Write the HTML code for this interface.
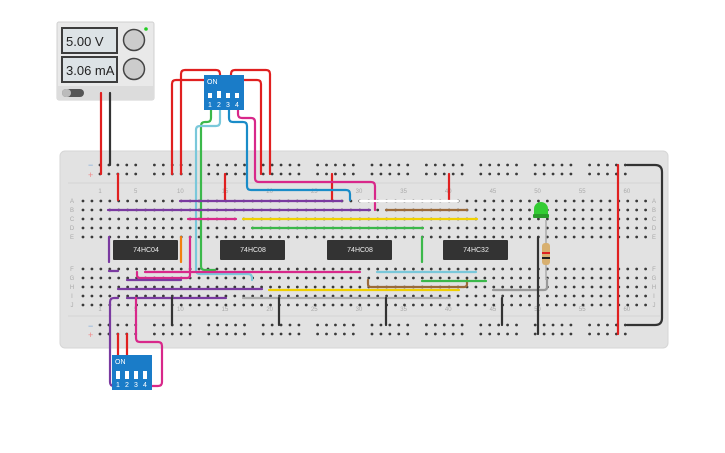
<!DOCTYPE html>
<html><head><meta charset="utf-8"><style>
html,body{margin:0;padding:0;background:#fff;width:725px;height:453px;overflow:hidden}
svg{display:block}
text{font-family:"Liberation Sans",sans-serif}
</style></head><body>
<svg id="s" width="725" height="453" viewBox="0 0 725 453" xmlns="http://www.w3.org/2000/svg">
<rect x="60" y="151" width="608" height="197" rx="5" fill="#e2e2e2" stroke="#d6d6d6"/>
<line x1="68" y1="183" x2="660" y2="183" stroke="#d4d4d4"/>
<line x1="68" y1="316" x2="660" y2="316" stroke="#d4d4d4"/>
<g id="holes" fill="#3a3a3a"></g>
<g font-size="6" fill="#aaa" id="labels"></g>
<text x="88" y="168" font-size="9" fill="#7aa7d8">−</text>
<text x="88" y="178" font-size="9" fill="#e88">+</text>
<text x="88" y="329" font-size="9" fill="#7aa7d8">−</text>
<text x="88" y="338" font-size="9" fill="#e88">+</text>

<rect x="57" y="22" width="97" height="78" rx="2" fill="#e9e9e9" stroke="#d0d0d0"/>
<rect x="57" y="86" width="97" height="14" fill="#dcdcdc"/>
<rect x="62" y="28" width="55" height="25" fill="#dde3e6" stroke="#3d3d3d" stroke-width="2"/>
<rect x="62" y="57" width="55" height="25" fill="#dde3e6" stroke="#3d3d3d" stroke-width="2"/>
<text x="66" y="46" font-size="13" fill="#222">5.00 V</text>
<text x="66" y="75" font-size="13" fill="#222">3.06 mA</text>
<circle cx="134" cy="40" r="10.5" fill="#ccc" stroke="#444" stroke-width="1.5"/>
<circle cx="134" cy="69" r="10.5" fill="#ccc" stroke="#444" stroke-width="1.5"/>
<circle cx="146" cy="29" r="1.8" fill="#2c2"/>
<rect x="62" y="89" width="22" height="8" rx="4" fill="#555"/>
<rect x="62" y="89" width="9" height="8" rx="4" fill="#bbb"/>

<g fill="none" stroke-width="2.2" stroke-linecap="round" stroke-linejoin="round">
<path d="M101 93V174" stroke="#e02020"/>
<path d="M110 93V165" stroke="#333"/>
<path d="M118 174V200" stroke="#e02020"/>
<path d="M225 174V200" stroke="#e02020"/>
<path d="M332 174V200" stroke="#e02020"/>
<path d="M449 174V200" stroke="#e02020"/>
<path d="M618 165V334" stroke="#e02020"/>
<path d="M172 174V84q0-4 4-4H204" stroke="#e02020"/>
<path d="M181 174V74q0-4 4-4H216q4 0 4 4v3" stroke="#e02020"/>
<path d="M261 174V84q0-4-4-4H244" stroke="#e02020"/>
<path d="M270 174V74q0-4-4-4H235q-4 0-4 4v3" stroke="#e02020"/>
<path d="M211 108V118q0 4-4 4h-2q-4 0-4 4V266q0 4 4 4H215" stroke="#3bb84a"/>
<path d="M220 108V122q0 4-4 4h-16q-4 0-4 4V270q0 4 4 4H248q4 0 4 4v2" stroke="#7ac8da"/>
<path d="M229 108V118q0 4 4 4h10q4 0 4 4V186q0 4 4 4H346q4 0 4 4v6" stroke="#1a8cc8"/>
<path d="M238 108V114q0 4 4 4h9q4 0 4 4V178q0 4 4 4H371q4 0 4 4v24" stroke="#d8288a"/>
<path d="M180 201H342" stroke="#7a3aa0"/>
<path d="M360 201H458" stroke="#fff"/>
<path d="M108 210H370" stroke="#7a3aa0"/>
<path d="M386 210H467" stroke="#9a6a3a"/>
<path d="M188 219H236" stroke="#d8288a"/>
<path d="M243 219H477" stroke="#f0d000"/>
<path d="M252 228H423" stroke="#3bb84a"/>
<path d="M109 237V262" stroke="#7a3aa0"/>
<path d="M181 237V262" stroke="#f08010"/>
<path d="M190 237V262" stroke="#d8288a"/>
<path d="M422 237V262" stroke="#3bb84a"/>
<path d="M109 271H118" stroke="#7a3aa0"/>
<path d="M145 272H360" stroke="#d8288a"/>
<path d="M190 262V275q0 3-3 3H140q-3 0-3-3v-3" stroke="#d8288a"/>
<path d="M377 272H476" stroke="#7ac8da"/>
<path d="M127 280H181" stroke="#7a3aa0"/>
<path d="M368 280v4q0 3 3 3H464q3 0 3-3v-4" stroke="#9a6a3a"/>
<path d="M422 281H486" stroke="#3bb84a"/>
<path d="M118 289H262" stroke="#7a3aa0"/>
<path d="M269 290H459" stroke="#f0d000"/>
<path d="M493 290H544q3 0 3-3v-8" stroke="#999"/>
<path d="M243 298H450" stroke="#aaa"/>
<path d="M127 298H226" stroke="#7a3aa0"/>
<path d="M118 298h-4q-4 0-4 4V382q0 4 4 4h2" stroke="#7a3aa0"/>
<path d="M136 298V338q0 4 4 4h18q4 0 4 4V382q0 4-4 4h-6" stroke="#d8288a"/>
<path d="M172 298V325" stroke="#333"/>
<path d="M279 298V325" stroke="#333"/>
<path d="M386 298V325" stroke="#333"/>
<path d="M502 298V325" stroke="#333"/>
<path d="M538 237V334" stroke="#333"/>
<path d="M627 165H655q7 0 7 7V318q0 7-7 7H627" stroke="#333"/>
<path d="M118 334V356" stroke="#e02020"/>
<path d="M127 334V356" stroke="#e02020"/>
</g>

<g font-size="7" fill="#eee" font-family="Liberation Mono,monospace" text-anchor="middle">
<rect x="113" y="240" width="65" height="20" rx="1" fill="#333"/><text x="146" y="252">74HC04</text>
<rect x="220" y="240" width="65" height="20" rx="1" fill="#333"/><text x="253" y="252">74HC08</text>
<rect x="327" y="240" width="65" height="20" rx="1" fill="#333"/><text x="360" y="252">74HC08</text>
<rect x="443" y="240" width="65" height="20" rx="1" fill="#333"/><text x="476" y="252">74HC32</text>
</g>

<path d="M534 216v-7a7 7 0 0 1 14 0v7z" fill="#3c3"/>
<rect x="533" y="214" width="16" height="4" rx="1" fill="#2a9a2a"/>
<path d="M546 220V280" stroke="#aaa" stroke-width="1.5"/>
<rect x="542" y="243" width="8" height="22" rx="3" fill="#d8b070"/>
<rect x="542" y="252" width="8" height="2" fill="#d22"/>
<rect x="542" y="257" width="8" height="2" fill="#222"/>

<g>
<rect x="204" y="75" width="40" height="35" fill="#1a7cc8"/>
<text x="207" y="84" font-size="7" fill="#fff">ON</text>
<g fill="#fff"><rect x="208" y="88" width="4" height="10"/><rect x="217" y="88" width="4" height="10"/><rect x="226" y="88" width="4" height="10"/><rect x="235" y="88" width="4" height="10"/></g>
<g fill="#1a7cc8"><rect x="208" y="88" width="4" height="5"/><rect x="217" y="88" width="4" height="3"/><rect x="226" y="88" width="4" height="5"/><rect x="235" y="88" width="4" height="5"/></g>
<g font-size="7" fill="#fff"><text x="208" y="107">1</text><text x="217" y="107">2</text><text x="226" y="107">3</text><text x="235" y="107">4</text></g>
</g>
<g>
<rect x="112" y="355" width="40" height="35" fill="#1a7cc8"/>
<text x="115" y="364" font-size="7" fill="#fff">ON</text>
<g fill="#fff"><rect x="116" y="367" width="4" height="12"/><rect x="125" y="367" width="4" height="12"/><rect x="134" y="367" width="4" height="12"/><rect x="143" y="367" width="4" height="12"/></g>
<g fill="#1a7cc8"><rect x="116" y="367" width="4" height="4"/><rect x="125" y="367" width="4" height="4"/><rect x="134" y="367" width="4" height="4"/><rect x="143" y="367" width="4" height="4"/></g>
<g font-size="7" fill="#fff"><text x="116" y="387">1</text><text x="125" y="387">2</text><text x="134" y="387">3</text><text x="143" y="387">4</text></g>
</g>
</svg>
<script>
(function(){
var ns="http://www.w3.org/2000/svg",h=document.getElementById("holes"),L=document.getElementById("labels");
function c(x,y){var e=document.createElementNS(ns,"circle");e.setAttribute("cx",x);e.setAttribute("cy",y);e.setAttribute("r",1.4);h.appendChild(e);}
function t(x,y,s,a){var e=document.createElementNS(ns,"text");e.setAttribute("x",x);e.setAttribute("y",y);if(a)e.setAttribute("text-anchor",a);e.textContent=s;L.appendChild(e);}
var p=8.93,rows=[201,210,219,228,237,269,278,287,296,305],names="ABCDEFGHIJ";
for(var r=0;r<10;r++){for(var i=0;i<64;i++)c(83+i*p,rows[r]);t(72,rows[r]+2,names[r],"middle");t(654,rows[r]+2,names[r],"middle");}
[165,174,325,334].forEach(function(y){for(var g=0;g<10;g++)for(var k=0;k<5;k++)c(100+g*54.4+k*p,y);});
[1,5,10,15,20,25,30,35,40,45,50,55,60].forEach(function(n){var x=100+(n-1)*p;t(x,193,n,"middle");t(x,311,n,"middle");});
})();
</script>
</body></html>
